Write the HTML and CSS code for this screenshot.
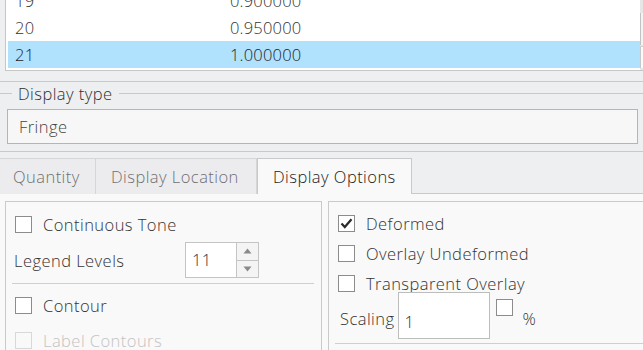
FILE: index.html
```html
<!DOCTYPE html>
<html>
<head>
<meta charset="utf-8">
<link rel="stylesheet" href="styles.css">
</head>
<body>

<div class="list">
  <div class="rows">
    <div class="row"><span class="id">19</span><span class="val">0.900000</span></div>
    <div class="row"><span class="id">20</span><span class="val">0.950000</span></div>
    <div class="row sel"><span class="id">21</span><span class="val">1.000000</span></div>
  </div>
  <div class="vscroll">
    <div class="thumb"></div>
    <div class="sbtn"></div>
  </div>
</div>

<div class="rule"></div>

<div class="group-title"><span>Display type</span></div>
<div class="combo">Fringe</div>

<div class="rule rule-low"></div>

<div class="tabs">
  <div class="tab tab-qty">Quantity</div>
  <div class="tab tab-loc">Display Location</div>
  <div class="tab active">Display Options</div>
  <div class="tab-rest"></div>
</div>

<div class="pane">
  <div class="box box-left">
    <label class="check first"><span class="cb"></span>Continuous Tone</label>
    <div class="field">
      <span class="field-label">Legend Levels</span>
      <div class="spin">
        <span class="spin-val">11</span>
        <div class="spin-btns">
          <span class="spin-up"><svg width="9" height="6" viewBox="0 0 9 6"><path d="M4.5 0.5 L8.5 5.5 L0.5 5.5 Z" fill="#8a8a8a"/></svg></span>
          <span class="spin-down"><svg width="9" height="6" viewBox="0 0 9 6"><path d="M0.5 0.5 L8.5 0.5 L4.5 5.5 Z" fill="#8a8a8a"/></svg></span>
        </div>
      </div>
    </div>
    <div class="hr hr-left"></div>
    <label class="check contour"><span class="cb"></span>Contour</label>
    <label class="check disabled"><span class="cb"></span>Label Contours</label>
  </div>

  <div class="box box-right">
    <label class="check row30"><span class="cb"><svg width="15" height="15" viewBox="0 0 15 15"><path d="M2.5 7.5 L5.8 11 L12.5 3.2" fill="none" stroke="#2b2b2b" stroke-width="2.2"/></svg></span>Deformed</label>
    <label class="check row30"><span class="cb"></span>Overlay Undeformed</label>
    <label class="check row30"><span class="cb"></span>Transparent Overlay</label>
    <div class="scale">
      <span class="scale-label">Scaling</span>
      <div class="scale-input">1</div>
      <span class="cb scale-cb"></span>
      <span class="scale-pct">%</span>
    </div>
    <div class="hr hr-right"></div>
  </div>
</div>

</body>
</html>
```

FILE: styles.css
```css
html, body { margin: 0; padding: 0; }
body { background: #eeeff1; color: #333333; font-family: "Open Sans", "Noto Sans", sans-serif;
       font-weight: 300; font-size: 16.5px; letter-spacing: 0.45px; width: 643px; height: 350px; overflow: hidden; }

/* ----- result list ----- */
.list { display: flex; height: 83px; margin: -13px -14px 0 5px; background: #ffffff;
        border-left: 1px solid #c6c6c6; border-bottom: 1px solid #c6c6c6; }
.rows { flex: 1; padding: 0 0 2px 2px; }
.row { display: flex; align-items: center; height: 27px; }
.row .id { width: 215px; padding-left: 7px; }
.row .val { flex: 1; letter-spacing: 0.2px; }
.row.sel { background: #b0e1fd; color: #1f1f1f; }
.vscroll { width: 17px; display: flex; flex-direction: column; background: #e6e6e6; overflow: hidden; }
.thumb { height: 32px; background: #f3f3f3; border-left: 1px solid #c2c2c2; margin-top: 26px; }
.sbtn { height: 21px; margin-top: 1px; background: #fafafa; border-left: 1px solid #c8c8c8; border-top: 1px solid #d2d2d2; }

.rule { height: 1px; background: #c9c9c9; margin-top: 10px; }
.rule-low { margin-top: 7px; }

/* ----- display type group ----- */
.group-title { display: flex; align-items: center; height: 23px; color: #2e2e2e; }
.group-title::before { content: ""; width: 12px; height: 1px; background: #c9c9c9; }
.group-title::after { content: ""; flex: 1; height: 1px; background: #c9c9c9; }
.group-title span { padding: 0 6px; }
.combo { margin: 4px 0 0 7px; width: 618px; height: 33px; padding-left: 11px; line-height: 33px;
         background: #f7f7f7; border: 1px solid #b5b5b5; color: #444444; }

/* ----- tabs ----- */
.tabs { display: flex; margin-top: 6px; height: 36px; }
.tab { box-sizing: border-box; line-height: 35px; color: #707070; background: #ececee; white-space: nowrap;
       border-top: 1px solid #d6d6d6; border-right: 1px solid #d6d6d6; }
.tab-qty { width: 96px; padding-left: 13px; }
.tab-loc { width: 161px; padding-left: 15px; }
.tab.active { width: 155px; background: #f9f9f9; color: #222222; border: 1px solid #c9c9c9; border-bottom: none;
              padding-left: 15px; line-height: 36px; }
.tab-rest { flex: 1; border-bottom: 1px solid #c9c9c9; }

.pane { display: grid; grid-template-columns: 317px 1fr; column-gap: 6px; background: #f9f9f9;
        padding: 7px 0 0 5px; height: 200px; }
.box { border: 1px solid #cacaca; border-bottom: none; }
.box-left { padding-top: 5px; }
.box-right { padding-top: 6px; margin-right: -20px; }

/* ----- controls ----- */
.check { display: flex; align-items: center; height: 35px; padding-left: 9px; gap: 11px; color: #333333; }
.cb { width: 15px; height: 15px; border: 1px solid #8c8c8c; background: #ffffff; display: inline-flex; flex: none; }
.check.row30 { height: 30px; }
.check.contour { margin-top: 4px; }
.check.disabled { color: #c3c3c3; }
.check.disabled .cb { border-color: #d8d8d8; background: #f9f9f9; }

.field { display: flex; align-items: center; height: 36px; padding-left: 8px; }
.field-label { width: 171px; }
.spin { display: flex; height: 34px; border: 1px solid #c4c4c4; background: #ffffff; }
.spin-val { width: 44px; padding-left: 6px; line-height: 34px; }
.spin-btns { display: flex; flex-direction: column; width: 21px; border-left: 1px solid #c4c4c4; background: #f4f4f4; }
.spin-btns span { flex: 1; display: flex; align-items: center; justify-content: center; }
.spin-up { border-bottom: 1px solid #c4c4c4; }

.hr { height: 1px; background: #cfcfcf; }
.hr-left { margin: 5px 7px 0 6px; }
.hr-right { margin: 4px 0 0 6px; }

.scale { display: flex; align-items: flex-start; margin-top: -6px; padding-left: 11px; height: 47px; }
.scale-label { align-self: flex-end; padding-bottom: 9px; }
.scale-input { margin-left: 3px; width: 84px; height: 45px; padding-left: 6px; line-height: 58px;
               border: 1px solid #bdbdbd; background: #ffffff; }
.scale-cb { margin: 7px 0 0 6px; }
.scale-pct { align-self: flex-end; padding: 0 0 9px 10px; }
```
